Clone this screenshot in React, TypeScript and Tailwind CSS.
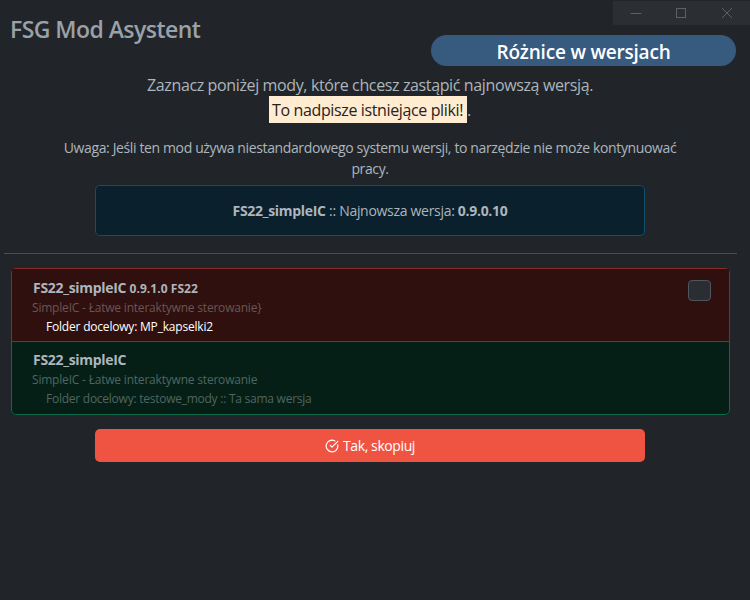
import { CircleCheckBig } from 'lucide-react'

export default function App() {
  return (
    <div className="relative h-[600px] w-[750px] overflow-hidden bg-[#212529] font-['Open_Sans','Liberation_Sans',sans-serif] text-[#adb5bd]">
      {/* Window controls */}
      <div className="absolute right-0 top-[1px] flex h-[24px] w-[137px] items-center justify-around bg-[#2b2f33] text-[#5d6165]">
        <svg width="12" height="12" viewBox="0 0 12 12" stroke="currentColor" fill="none">
          <path d="M0.5 6.5h11" />
        </svg>
        <svg width="12" height="12" viewBox="0 0 12 12" stroke="currentColor" fill="none">
          <rect x="1.5" y="1.5" width="9" height="9" />
        </svg>
        <svg width="12" height="12" viewBox="0 0 12 12" stroke="currentColor" fill="none">
          <path d="M1 1l10 10M11 1L1 11" />
        </svg>
      </div>

      {/* Header */}
      <div className="flex h-[66px] items-start justify-between pl-[11px] pr-[14px]">
        <h1 className="mt-[13px] -ml-px text-[23px] font-semibold leading-[32px] tracking-[-0.55px] text-[#9aa1a8]">FSG Mod Asystent</h1>
        <div className="mt-[35px] flex h-[31px] w-[305px] items-center justify-center rounded-full bg-[#375a7f] pt-[3px] text-[19px] font-semibold tracking-[-0.2px] text-white">
          Różnice w wersjach
        </div>
      </div>

      <div className="w-[740px]">
        {/* Intro */}
        <div className="mt-[9px] text-center text-[16px] leading-[21px] tracking-[-0.37px]">
          <p>Zaznacz poniżej mody, które chcesz zastąpić najnowszą wersją.</p>
          <p className="h-[27px]">
            <span className="inline-block h-[27px] w-[198px] whitespace-nowrap bg-[#ffecd1] pl-[3px] text-left leading-[29px] text-[#2b2118]">To nadpisze istniejące pliki!</span>.
          </p>
        </div>

        <p className="mx-auto mt-[14px] w-[630px] text-center text-[14px] leading-[21px] tracking-[-0.37px]">
          Uwaga: Jeśli ten mod używa niestandardowego systemu wersji, to narzędzie nie może kontynuować pracy.
        </p>

        {/* Version info */}
        <div className="mx-auto mt-[6px] flex h-[51px] w-[550px] items-center justify-center rounded-[5px] border border-[#0f506a] bg-[#0a202d] text-[14px] tracking-[-0.3px]">
          <span><b className="font-bold">FS22_simpleIC</b> :: Najnowsza wersja: <b className="font-bold">0.9.0.10</b></span>
        </div>

        <hr className="mx-[4px] mt-[17px] w-[733px] border-t border-[#4a4e52]" />

        {/* Mod list */}
        <div className="mx-[11px] mt-[14px] w-[719px] overflow-hidden rounded-[5px]">
          <div className="relative h-[74px] border border-[#842e2b] bg-[#2f100e] pl-[21px] pt-[8px] text-[14px] leading-[21px] tracking-[-0.3px]">
            <div className="font-bold">FS22_simpleIC <span className="text-[12px] tracking-[0.05px]">0.9.1.0 FS22</span></div>
            <div className="-ml-px text-[12px] leading-[18px] tracking-[-0.2px] text-[#6c5554]">SimpleIC - Łatwe interaktywne sterowanie{'}'}</div>
            <div className="mt-[1px] pl-[13px] text-[12px] leading-[18px] tracking-[-0.2px] text-white">Folder docelowy: MP_kapselki2</div>
            <div className="absolute right-[18px] top-[11px] h-[21px] w-[23px] rounded-[4px] border border-[#4f555c] bg-[#2a2e33]" />
          </div>
          <div className="-mt-px h-[74px] rounded-b-[5px] border border-[#0f6a48] bg-[#051f17] pl-[21px] pt-[8px] text-[14px] leading-[20px] tracking-[-0.3px]">
            <div className="font-bold">FS22_simpleIC</div>
            <div className="-ml-px text-[12px] leading-[20px] tracking-[-0.2px] text-[#4f6660]">SimpleIC - Łatwe interaktywne sterowanie</div>
            <div className="pl-[13px] text-[12px] leading-[18px] tracking-[-0.25px] text-[#4f6660]">Folder docelowy: testowe_mody :: Ta sama wersja</div>
          </div>
        </div>

        {/* Copy button */}
        <button className="mx-auto mt-[14px] flex h-[33px] w-[550px] items-center justify-center gap-[4px] rounded-[5px] bg-[#ef5442] text-[14px] tracking-[-0.4px] text-white">
          <CircleCheckBig size={14} />
          Tak, skopiuj
        </button>
      </div>
    </div>
  )
}
